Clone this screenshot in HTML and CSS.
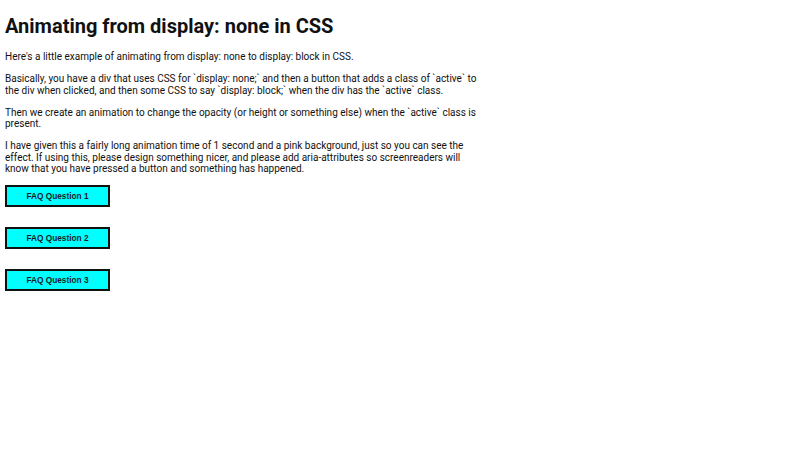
FILE: index.html
```html
<!DOCTYPE html>
<html lang="en">
<head>
  <meta charset="UTF-8">
  <title>Animating from display: none in CSS</title>
  <link rel="stylesheet" href="styles.css">
</head>
<body>
  <main class="page">
    <h1>Animating from display: none in CSS</h1>

    <p>Here's a little example of animating from display: none to display: block in CSS.</p>
    <p>Basically, you have a div that uses CSS for `display: none;` and then a button that adds a class of `active` to the div when clicked, and then some CSS to say `display: block;` when the div has the `active` class.</p>
    <p>Then we create an animation to change the opacity (or height or something else) when the `active` class is present.</p>
    <p>I have given this a fairly long animation time of 1 second and a pink background, just so you can see the effect. If using this, please design something nicer, and please add aria-attributes so screenreaders will know that you have pressed a button and something has happened.</p>

    <div class="faq">
      <div class="faq-item">
        <button class="faq-button">FAQ Question 1</button>
        <div class="faq-answer">Answer 1</div>
      </div>
      <div class="faq-item">
        <button class="faq-button">FAQ Question 2</button>
        <div class="faq-answer">Answer 2</div>
      </div>
      <div class="faq-item">
        <button class="faq-button">FAQ Question 3</button>
        <div class="faq-answer">Answer 3</div>
      </div>
    </div>
  </main>
</body>
</html>
```

FILE: styles.css
```css
body {
  margin: 5px;
  background: #fff;
  color: #111;
  font-family: Roboto, "Noto Sans", sans-serif;
}

.page {
  width: 478px;
}

h1 {
  font-size: 20px;
  font-weight: 700;
  margin: 9px 0 13px;
}

p {
  font-size: 10px;
  line-height: 11.5px;
  margin: 0 0 10.5px;
}

.faq {
  display: flex;
  flex-direction: column;
  gap: 20px;
}

.faq-button {
  display: block;
  width: 105px;
  height: 22px;
  padding: 0;
  background: #00ffff;
  border: 2px solid #111;
  color: #1a1a2a;
  font-family: "Liberation Sans", Arial, sans-serif;
  font-size: 8.3px;
  font-weight: 700;
  cursor: pointer;
}

.faq-answer {
  display: none;
  background: pink;
}

.faq-answer.active {
  display: block;
  animation: fade-in 1s;
}

@keyframes fade-in {
  from { opacity: 0; }
  to { opacity: 1; }
}
```
